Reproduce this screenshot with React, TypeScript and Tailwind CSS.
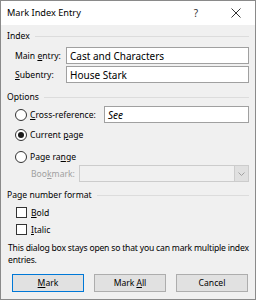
import React from 'react';

const font = { fontFamily: '"Noto Sans", "Liberation Sans", sans-serif' };

const GroupHeader: React.FC<{ label: string; className?: string }> = ({ label, className = '' }) => (
  <div className={`flex items-center h-[14px] ${className}`}>
    <span>{label}</span>
    <div className="flex-1 h-px bg-[#dcdcdc] ml-[5px]" />
  </div>
);

const Radio: React.FC<{ checked?: boolean }> = ({ checked = false }) => (
  <span className="w-[12px] h-[12px] rounded-full border border-[#333333] bg-white flex items-center justify-center shrink-0">
    {checked && <span className="w-[6px] h-[6px] rounded-full bg-[#1a1a1a]" />}
  </span>
);

const Checkbox: React.FC = () => (
  <span className="w-[11px] h-[11px] border border-[#333333] bg-white shrink-0" />
);

export default function App() {
  return (
    <div
      className="w-[256px] h-[300px] border border-[#8a8a8a] bg-[#f0f0f0] flex flex-col text-[8.6px] text-black leading-[12px]"
      style={font}
    >
      {/* Title bar */}
      <div className="h-[24px] bg-white flex items-center pl-[6px] shrink-0">
        <span className="text-[9.2px] flex-1">Mark Index Entry</span>
        <span className="w-[8px] text-center text-[10px] text-[#333]">?</span>
        <svg className="ml-[31px] mr-[14px]" width="10" height="10" viewBox="0 0 10 10">
          <path d="M0.5 0.5 L9.5 9.5 M9.5 0.5 L0.5 9.5" stroke="#333" strokeWidth="1" />
        </svg>
      </div>

      <div className="flex flex-col pl-[6px] pr-[6px] pt-[4px]">
        <GroupHeader label="Index" />

        <div className="flex items-center mt-[4px] h-[17px]">
          <span className="ml-[8px] w-[51px]">
            Main <span className="underline">e</span>ntry:
          </span>
          <div className="flex-1 h-[17px] bg-white border border-[#a0a0a0] flex items-center px-[3px] text-[10px]">
            Cast and Characters
          </div>
        </div>
        <div className="flex items-center mt-[2px] h-[17px]">
          <span className="ml-[8px] w-[51px]">
            <span className="underline">S</span>ubentry:
          </span>
          <div className="flex-1 h-[17px] bg-white border border-[#a0a0a0] flex items-center px-[3px] text-[10px]">
            House Stark
          </div>
        </div>

        <GroupHeader label="Options" className="mt-[7px]" />

        <div className="flex items-center mt-[2px] h-[17px]">
          <span className="ml-[8px]"><Radio /></span>
          <span className="ml-[3px] w-[74px]">
            <span className="underline">C</span>ross-reference:
          </span>
          <div className="flex-1 h-[17px] bg-white border border-[#a0a0a0] flex items-center px-[3px] italic text-[10px]">
            See
          </div>
        </div>
        <div className="flex items-center mt-[5px] h-[14px]">
          <span className="ml-[8px]"><Radio checked /></span>
          <span className="ml-[3px]">
            Current <span className="underline">p</span>age
          </span>
        </div>
        <div className="flex items-center mt-[8px] h-[14px]">
          <span className="ml-[8px]"><Radio /></span>
          <span className="ml-[3px]">
            Page ra<span className="underline">n</span>ge
          </span>
        </div>
        <div className="flex items-center mt-[1px] h-[17px]">
          <span className="ml-[24px] w-[48px] text-[#a0a0a0]">
            Boo<span className="underline">k</span>mark:
          </span>
          <div className="flex-1 h-[17px] border border-[#cccccc] bg-[#f0f0f0] flex justify-end">
            <div className="w-[14px] h-full bg-[#e0e0e0] border-l border-[#cccccc] flex items-center justify-center">
              <svg width="7" height="4" viewBox="0 0 7 4">
                <path d="M0.5 0.5 L3.5 3.5 L6.5 0.5" stroke="#a0a0a0" fill="none" strokeWidth="1" />
              </svg>
            </div>
          </div>
        </div>

        <GroupHeader label="Page number format" className="mt-[6px]" />

        <div className="flex items-center mt-[4px] h-[13px]">
          <span className="ml-[9px] flex items-center"><Checkbox /></span>
          <span className="ml-[4px]">
            <span className="underline">B</span>old
          </span>
        </div>
        <div className="flex items-center mt-[4px] h-[13px]">
          <span className="ml-[9px] flex items-center"><Checkbox /></span>
          <span className="ml-[4px]">
            <span className="underline">I</span>talic
          </span>
        </div>

        <p className="mt-[6px] pl-[1px] tracking-[-0.2px] whitespace-nowrap">
          This dialog box stays open so that you can mark multiple index
          <br />
          entries.
        </p>

        <div className="flex mt-[8px] pl-[5px] gap-[10px]">
          <button className="w-[72px] h-[18px] border border-[#0078d7] bg-[#e1e1e1] flex items-center justify-center">
            <span className="underline">M</span>ark
          </button>
          <button className="w-[72px] h-[18px] border border-[#adadad] bg-[#e1e1e1] flex items-center justify-center">
            Mark <span className="underline ml-[2px]">A</span>ll
          </button>
          <button className="w-[72px] h-[18px] border border-[#adadad] bg-[#e1e1e1] flex items-center justify-center">
            Cancel
          </button>
        </div>
      </div>
    </div>
  );
}
